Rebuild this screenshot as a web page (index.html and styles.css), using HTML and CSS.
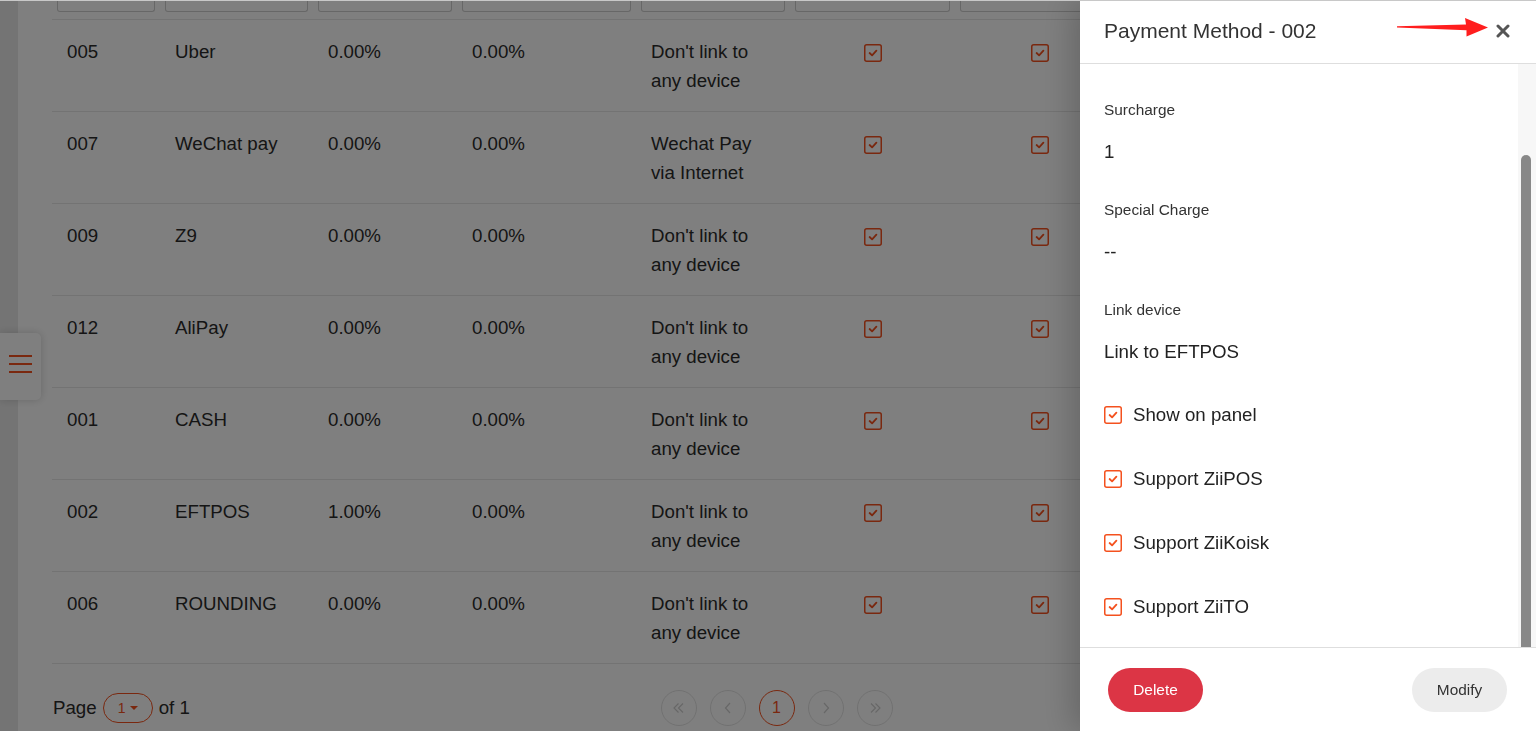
FILE: index.html
```html
<!DOCTYPE html>
<html lang="en">
<head>
<meta charset="utf-8">
<title>Payment Method - 002</title>
<link rel="stylesheet" href="styles.css">
</head>
<body>
<div class="app">
  <div class="rail"></div>
  <main class="content">
    <div class="trow filters">
      <div class="fcell"><span class="finput"></span></div>
      <div class="fcell"><span class="finput"></span></div>
      <div class="fcell"><span class="finput"></span></div>
      <div class="fcell"><span class="finput"></span></div>
      <div class="fcell"><span class="finput"></span></div>
      <div class="fcell"><span class="finput"></span></div>
      <div class="fcell"><span class="finput"></span></div>
      <div class="fcell"><span class="finput"></span></div>
    </div>

    <div class="trow data">
      <div class="cell">005</div><div class="cell">Uber</div><div class="cell">0.00%</div><div class="cell">0.00%</div>
      <div class="cell">Don't link to<br>any device</div>
      <div class="cell center"><svg class="cb" viewBox="0 0 18 18"><rect x="0.75" y="0.75" width="16.5" height="16.5" rx="2"/><polyline points="5.6,9 8.1,11.4 12.4,6.6"/></svg></div>
      <div class="cell center"><svg class="cb" viewBox="0 0 18 18"><rect x="0.75" y="0.75" width="16.5" height="16.5" rx="2"/><polyline points="5.6,9 8.1,11.4 12.4,6.6"/></svg></div>
      <div class="cell"></div>
    </div>
    <div class="trow data">
      <div class="cell">007</div><div class="cell">WeChat pay</div><div class="cell">0.00%</div><div class="cell">0.00%</div>
      <div class="cell">Wechat Pay<br>via Internet</div>
      <div class="cell center"><svg class="cb" viewBox="0 0 18 18"><rect x="0.75" y="0.75" width="16.5" height="16.5" rx="2"/><polyline points="5.6,9 8.1,11.4 12.4,6.6"/></svg></div>
      <div class="cell center"><svg class="cb" viewBox="0 0 18 18"><rect x="0.75" y="0.75" width="16.5" height="16.5" rx="2"/><polyline points="5.6,9 8.1,11.4 12.4,6.6"/></svg></div>
      <div class="cell"></div>
    </div>
    <div class="trow data">
      <div class="cell">009</div><div class="cell">Z9</div><div class="cell">0.00%</div><div class="cell">0.00%</div>
      <div class="cell">Don't link to<br>any device</div>
      <div class="cell center"><svg class="cb" viewBox="0 0 18 18"><rect x="0.75" y="0.75" width="16.5" height="16.5" rx="2"/><polyline points="5.6,9 8.1,11.4 12.4,6.6"/></svg></div>
      <div class="cell center"><svg class="cb" viewBox="0 0 18 18"><rect x="0.75" y="0.75" width="16.5" height="16.5" rx="2"/><polyline points="5.6,9 8.1,11.4 12.4,6.6"/></svg></div>
      <div class="cell"></div>
    </div>
    <div class="trow data">
      <div class="cell">012</div><div class="cell">AliPay</div><div class="cell">0.00%</div><div class="cell">0.00%</div>
      <div class="cell">Don't link to<br>any device</div>
      <div class="cell center"><svg class="cb" viewBox="0 0 18 18"><rect x="0.75" y="0.75" width="16.5" height="16.5" rx="2"/><polyline points="5.6,9 8.1,11.4 12.4,6.6"/></svg></div>
      <div class="cell center"><svg class="cb" viewBox="0 0 18 18"><rect x="0.75" y="0.75" width="16.5" height="16.5" rx="2"/><polyline points="5.6,9 8.1,11.4 12.4,6.6"/></svg></div>
      <div class="cell"></div>
    </div>
    <div class="trow data">
      <div class="cell">001</div><div class="cell">CASH</div><div class="cell">0.00%</div><div class="cell">0.00%</div>
      <div class="cell">Don't link to<br>any device</div>
      <div class="cell center"><svg class="cb" viewBox="0 0 18 18"><rect x="0.75" y="0.75" width="16.5" height="16.5" rx="2"/><polyline points="5.6,9 8.1,11.4 12.4,6.6"/></svg></div>
      <div class="cell center"><svg class="cb" viewBox="0 0 18 18"><rect x="0.75" y="0.75" width="16.5" height="16.5" rx="2"/><polyline points="5.6,9 8.1,11.4 12.4,6.6"/></svg></div>
      <div class="cell"></div>
    </div>
    <div class="trow data">
      <div class="cell">002</div><div class="cell">EFTPOS</div><div class="cell">1.00%</div><div class="cell">0.00%</div>
      <div class="cell">Don't link to<br>any device</div>
      <div class="cell center"><svg class="cb" viewBox="0 0 18 18"><rect x="0.75" y="0.75" width="16.5" height="16.5" rx="2"/><polyline points="5.6,9 8.1,11.4 12.4,6.6"/></svg></div>
      <div class="cell center"><svg class="cb" viewBox="0 0 18 18"><rect x="0.75" y="0.75" width="16.5" height="16.5" rx="2"/><polyline points="5.6,9 8.1,11.4 12.4,6.6"/></svg></div>
      <div class="cell"></div>
    </div>
    <div class="trow data">
      <div class="cell">006</div><div class="cell">ROUNDING</div><div class="cell">0.00%</div><div class="cell">0.00%</div>
      <div class="cell">Don't link to<br>any device</div>
      <div class="cell center"><svg class="cb" viewBox="0 0 18 18"><rect x="0.75" y="0.75" width="16.5" height="16.5" rx="2"/><polyline points="5.6,9 8.1,11.4 12.4,6.6"/></svg></div>
      <div class="cell center"><svg class="cb" viewBox="0 0 18 18"><rect x="0.75" y="0.75" width="16.5" height="16.5" rx="2"/><polyline points="5.6,9 8.1,11.4 12.4,6.6"/></svg></div>
      <div class="cell"></div>
    </div>

    <div class="pager">
      <div class="page-info">
        <span>Page</span>
        <span class="page-select">1<span class="caret"></span></span>
        <span>of 1</span>
      </div>
      <div class="page-nav">
        <span class="pbtn"><svg viewBox="0 0 20 20"><polyline points="9.5,5.5 5,10 9.5,14.5"/><polyline points="14,5.5 9.5,10 14,14.5"/></svg></span>
        <span class="pbtn"><svg viewBox="0 0 20 20"><polyline points="12,5 7.5,10 12,15"/></svg></span>
        <span class="pbtn active">1</span>
        <span class="pbtn"><svg viewBox="0 0 20 20"><polyline points="8,5 12.5,10 8,15"/></svg></span>
        <span class="pbtn"><svg viewBox="0 0 20 20"><polyline points="6,5.5 10.5,10 6,14.5"/><polyline points="10.5,5.5 15,10 10.5,14.5"/></svg></span>
      </div>
      <div></div>
    </div>
  </main>
</div>

<div class="menu-tab"><span></span><span></span><span></span></div>

<div class="overlay"></div>

<aside class="drawer">
  <header class="drawer-head">
    <h2 class="drawer-title">Payment Method - 002</h2>
    <svg class="annot-arrow" viewBox="0 0 95 24"><polygon points="1,11.3 70,9.6 69,3 92,12.6 70.5,21.5 70.5,15.3 1,12.4"/></svg>
    <span class="close"><svg viewBox="0 0 14 14"><line x1="2" y1="2" x2="12" y2="12"/><line x1="12" y1="2" x2="2" y2="12"/></svg></span>
  </header>
  <div class="drawer-body">
    <div class="drawer-inner">
      <div class="field">
        <div class="f-label">Surcharge</div>
        <div class="f-value">1</div>
      </div>
      <div class="field">
        <div class="f-label">Special Charge</div>
        <div class="f-value">--</div>
      </div>
      <div class="field">
        <div class="f-label">Link device</div>
        <div class="f-value">Link to EFTPOS</div>
      </div>
      <div class="checks">
        <div class="check-row"><svg class="cb" viewBox="0 0 18 18"><rect x="0.75" y="0.75" width="16.5" height="16.5" rx="2"/><polyline points="5.6,9 8.1,11.4 12.4,6.6"/></svg><span>Show on panel</span></div>
        <div class="check-row"><svg class="cb" viewBox="0 0 18 18"><rect x="0.75" y="0.75" width="16.5" height="16.5" rx="2"/><polyline points="5.6,9 8.1,11.4 12.4,6.6"/></svg><span>Support ZiiPOS</span></div>
        <div class="check-row"><svg class="cb" viewBox="0 0 18 18"><rect x="0.75" y="0.75" width="16.5" height="16.5" rx="2"/><polyline points="5.6,9 8.1,11.4 12.4,6.6"/></svg><span>Support ZiiKoisk</span></div>
        <div class="check-row"><svg class="cb" viewBox="0 0 18 18"><rect x="0.75" y="0.75" width="16.5" height="16.5" rx="2"/><polyline points="5.6,9 8.1,11.4 12.4,6.6"/></svg><span>Support ZiiTO</span></div>
      </div>
    </div>
    <div class="scroll-track"><div class="scroll-thumb"></div></div>
  </div>
  <footer class="drawer-foot">
    <button class="btn btn-delete">Delete</button>
    <button class="btn btn-modify">Modify</button>
  </footer>
</aside>

<div class="top-edge"></div>
</body>
</html>
```

FILE: styles.css
```css
* { box-sizing: border-box; }
html, body { margin: 0; padding: 0; height: 100%; overflow: hidden; }
body {
  font-family: "Liberation Sans", Arial, sans-serif;
  color: #333;
  background: #fff;
}

.app { display: flex; height: 100%; }
.rail { width: 18px; flex: none; background: #e9e9e9; }
.content {
  flex: 1;
  background: #fff;
  padding: 0 36px 0 34px;
}

.trow {
  display: grid;
  grid-template-columns: 108px 153px 144px 179px 154px 165px 170px 1fr;
  border-bottom: 1px solid #e6e6e6;
}
.filters { height: 20px; }
.fcell { padding: 0 5px; }
.finput {
  display: block;
  height: 12px;
  border: 1px solid #cfcfcf;
  border-top: none;
  border-radius: 0 0 3px 3px;
  background: #fff;
}

.data { padding: 17px 0 16px; }
.cell {
  padding: 0 15px;
  font-size: 18.7px;
  line-height: 29px;
  white-space: nowrap;
  color: #2b2b2b;
}
.cell.center { display: flex; justify-content: center; padding-top: 7px; }

.cb { width: 18px; height: 18px; flex: none; display: block; }
.cb rect { fill: #fff; stroke: #f4511e; stroke-width: 1.5; }
.cb polyline { fill: none; stroke: #f4511e; stroke-width: 1.8; stroke-linecap: round; stroke-linejoin: round; }

.pager {
  display: grid;
  grid-template-columns: 1fr auto 1fr;
  align-items: center;
  padding: 26px 0 0 1px;
}
.page-info {
  display: flex;
  align-items: center;
  gap: 6px;
  font-size: 18.7px;
  color: #2b2b2b;
}
.page-select {
  display: inline-flex;
  align-items: center;
  justify-content: center;
  gap: 4px;
  width: 50px;
  height: 30px;
  border: 1px solid #f4511e;
  border-radius: 15px;
  color: #f4511e;
  font-size: 14px;
}
.caret {
  width: 0; height: 0;
  border-left: 4px solid transparent;
  border-right: 4px solid transparent;
  border-top: 4px solid #f4511e;
}
.page-nav { display: flex; gap: 13px; }
.pbtn {
  width: 36px; height: 36px;
  border: 1px solid #e2e2e2;
  border-radius: 50%;
  display: flex; align-items: center; justify-content: center;
  color: #f4511e;
  font-size: 16px;
}
.pbtn svg { width: 20px; height: 20px; }
.pbtn polyline { fill: none; stroke: #cfcfcf; stroke-width: 1.2; }
.pbtn.active { border-color: #f4511e; }

.menu-tab {
  position: fixed;
  left: 0; top: 333px;
  width: 41px; height: 67px;
  background: #fff;
  border-radius: 0 5px 5px 0;
  box-shadow: 0 0 8px rgba(0,0,0,0.18);
  display: flex; flex-direction: column; justify-content: center; gap: 6.5px;
  padding: 0 0 5px 9px;
}
.menu-tab span { display: block; width: 23px; height: 1.5px; background: #f4511e; }

.overlay {
  position: fixed; inset: 0;
  background: rgba(0,0,0,0.5);
}

.drawer {
  position: fixed;
  top: 0; right: 0; bottom: 0;
  width: 456px;
  background: #fff;
  display: flex; flex-direction: column;
  box-shadow: -8px 0 30px rgba(0,0,0,0.2);
}
.drawer-head {
  position: relative;
  flex: none;
  height: 64px;
  border-bottom: 1px solid #dedede;
  display: flex; align-items: center; justify-content: space-between;
  padding: 0 26px 0 24px;
}
.drawer-title {
  margin: 0;
  font-weight: normal;
  font-size: 21px;
  color: #333;
  padding-bottom: 2px;
}
.annot-arrow {
  position: absolute;
  left: 316px; top: 15px;
  width: 95px; height: 24px;
}
.annot-arrow polygon { fill: #ff1e1e; }
.close { width: 14px; height: 14px; display: block; margin-top: -2px; }
.close svg { width: 14px; height: 14px; display: block; }
.close line { stroke: #555; stroke-width: 3; stroke-linecap: round; }

.drawer-body {
  flex: 1;
  display: flex;
  overflow: hidden;
}
.drawer-inner { flex: 1; padding: 36px 24px 0; }
.scroll-track {
  width: 18px;
  flex: none;
  background: #f7f7f7;
  display: flex;
  flex-direction: column;
  padding: 91px 5px 0 3px;
}
.scroll-thumb {
  flex: 1;
  background: #888;
  border-radius: 5px 5px 0 0;
}
.field { margin-bottom: 35px; }
.f-label { font-size: 15.4px; line-height: 20px; margin-bottom: 19px; color: #333; }
.f-value { font-size: 18.7px; line-height: 26px; color: #222; }
.checks { display: flex; flex-direction: column; gap: 32px; margin-top: -1px; }
.check-row {
  display: flex; align-items: center; gap: 11px;
  height: 32px;
  font-size: 18.7px;
  color: #222;
}

.drawer-foot {
  flex: none;
  height: 84px;
  border-top: 1px solid #dedede;
  display: flex; justify-content: space-between; align-items: flex-start;
  padding: 20px 29px 0 28px;
}
.btn {
  width: 95px; height: 44px;
  border: none;
  border-radius: 22px;
  font-family: inherit;
  font-size: 15.4px;
}
.btn-delete { background: #dc3545; color: #fff; }
.btn-modify { background: #ececec; color: #333; }

.top-edge {
  position: fixed; top: 0; left: 0; right: 0;
  height: 1px;
  background: #c8c8c8;
}
```
